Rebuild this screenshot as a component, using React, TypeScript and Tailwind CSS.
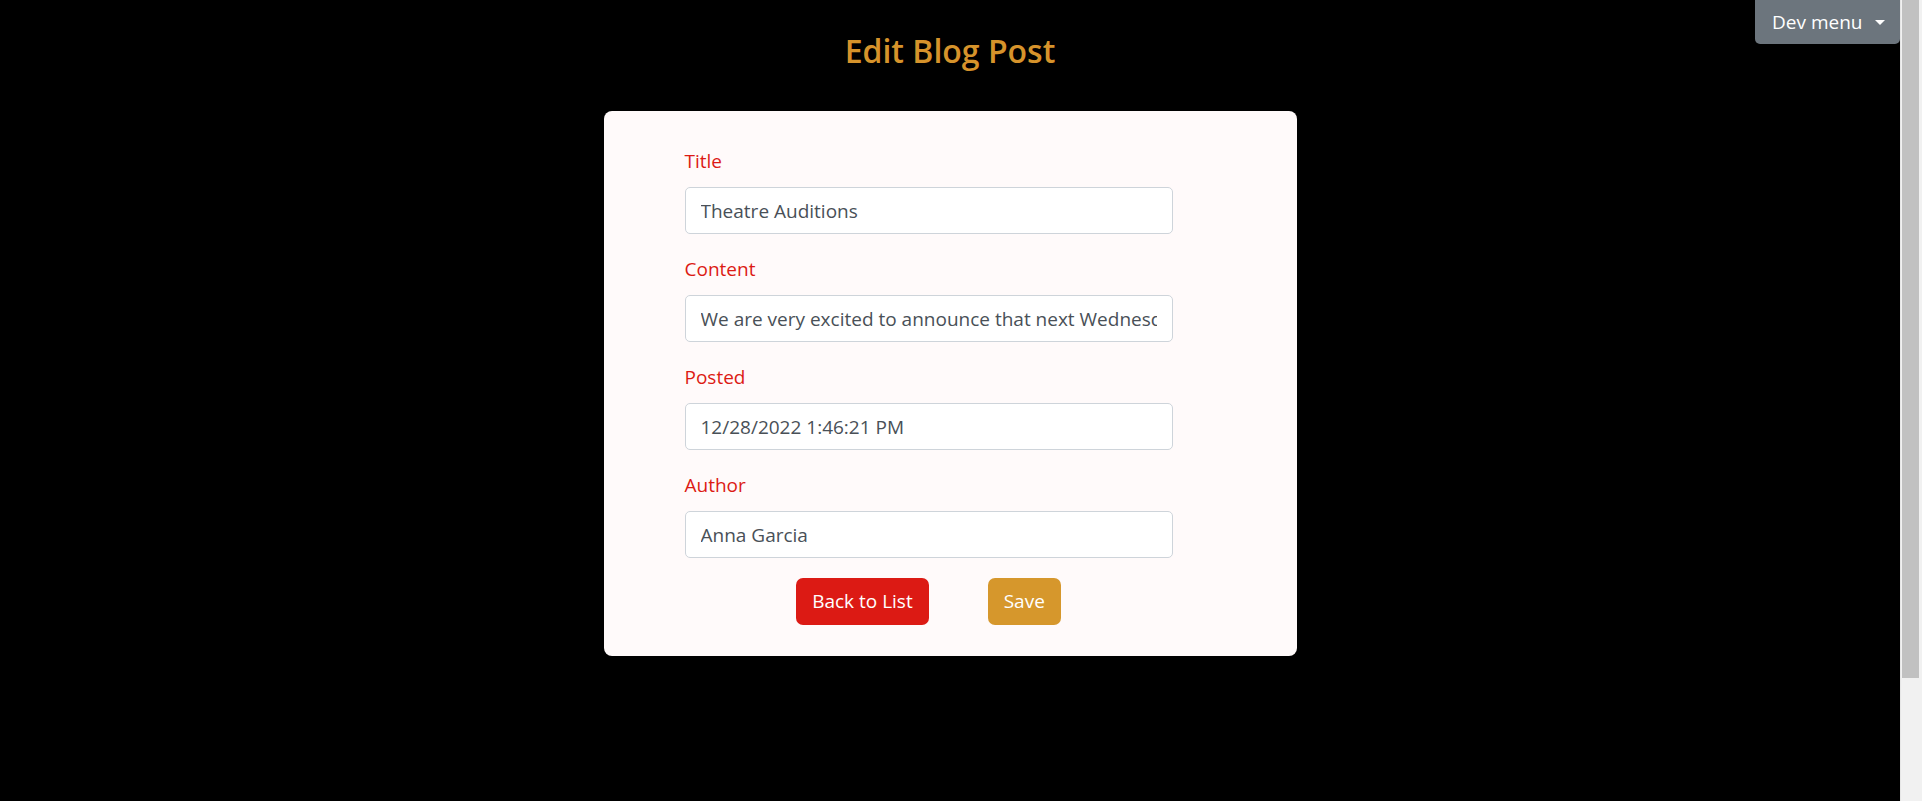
import React from 'react'

const fields = [
  { label: 'Title', value: 'Theatre Auditions' },
  {
    label: 'Content',
    value:
      'We are very excited to announce that next Wednesday we will be holding auditions for the spring production.',
  },
  { label: 'Posted', value: '12/28/2022 1:46:21 PM' },
  { label: 'Author', value: 'Anna Garcia' },
]

const EditBlogPost: React.FC = () => {
  return (
    <div className="flex h-screen bg-black font-['Open_Sans','Noto_Sans',sans-serif]">
      <div className="relative flex-1">
        <button className="absolute right-0 top-0 flex h-[44px] w-[145px] items-center rounded-b-[5px] bg-[#6c757d] pl-[17px] text-[19px] text-white">
          Dev menu
          <span className="ml-[13px] h-0 w-0 border-x-[5px] border-t-[5px] border-x-transparent border-t-white" />
        </button>

        <h2 className="pt-[30px] text-center text-[32px] font-semibold leading-[41px] text-[#d6932b]">
          Edit Blog Post
        </h2>

        <div className="mx-auto mt-[40px] w-[693px] rounded-[8px] bg-[#fffafa] pb-[31px] pl-[81px] pt-[35px]">
          <form className="w-[488px]" onSubmit={(e) => e.preventDefault()}>
            {fields.map((f) => (
              <div key={f.label} className="mb-[20px]">
                <label className="mb-[11px] block text-[19px] font-medium leading-[30px] text-[#dc1a14]">
                  {f.label}
                </label>
                <input
                  readOnly
                  defaultValue={f.value}
                  className="block h-[47px] w-full rounded-[5px] border border-[#ced4da] bg-white px-[15px] text-[19px] text-[#495057] outline-none"
                />
              </div>
            ))}
            <div className="flex justify-center gap-[59px]">
              <button
                type="button"
                className="h-[47px] rounded-[7px] bg-[#dc1a14] px-[16px] text-[19px] text-white"
              >
                Back to List
              </button>
              <button
                type="submit"
                className="h-[47px] rounded-[7px] bg-[#d6972c] px-[16px] text-[19px] text-white"
              >
                Save
              </button>
            </div>
          </form>
        </div>
      </div>

      {/* page scrollbar */}
      <div className="w-[22px] border-l border-[#e6e6e6] bg-[#f1f1f1]">
        <div className="ml-[1px] h-[678px] w-[17px] bg-[#c1c1c1]" />
      </div>
    </div>
  )
}

export default EditBlogPost
